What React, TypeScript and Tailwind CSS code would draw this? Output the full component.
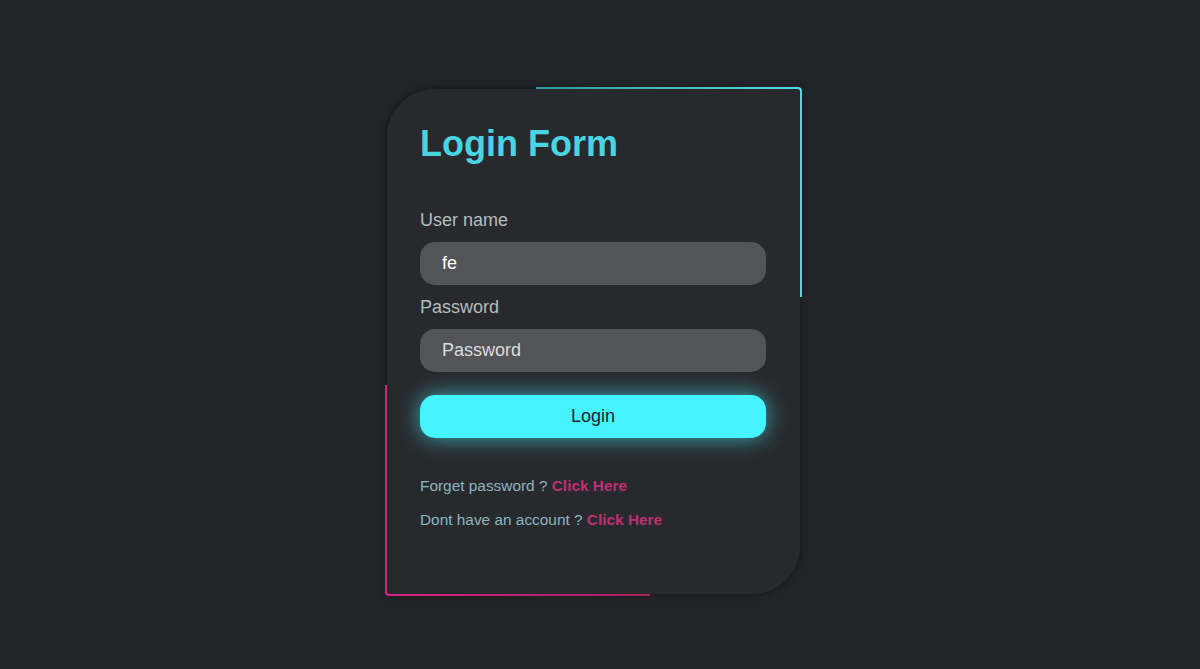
import React from "react";

export default function App() {
  return (
    <div
      className="min-h-screen w-full bg-[#232429] pt-[87px] pl-[385px]"
      style={{ fontFamily: '"Liberation Sans", Arial, sans-serif' }}
    >
      <div className="relative w-[417px] h-[509px]">
        <div className="h-full w-full rounded-tl-[50px] rounded-br-[50px] border-2 border-[#1c1d20] bg-[#28292d] pl-[33px] pr-[34px] pt-[35px] shadow-[0_0_6px_rgba(0,0,0,0.25)]">
          <h1 className="text-[36px] leading-[40px] font-bold text-[#48d4e0]">Login Form</h1>
          <form className="mt-[44px] flex flex-col" onSubmit={(e) => e.preventDefault()}>
            <label className="mb-[10px] text-[18px] leading-[24px] text-[#b4bcbd]">User name</label>
            <input
              className="mb-[10px] h-[43px] w-full rounded-[15px] bg-[#535457] pl-[22px] text-[18px] text-white outline-none placeholder:text-[#dcdcdc]"
              defaultValue="fe"
              placeholder="User name"
            />
            <label className="mb-[10px] text-[18px] leading-[24px] text-[#b4bcbd]">Password</label>
            <input
              type="password"
              className="h-[43px] w-full rounded-[15px] bg-[#535457] pl-[22px] text-[18px] text-white outline-none placeholder:text-[#dcdcdc]"
              placeholder="Password"
            />
            <button
              type="submit"
              className="mt-[23px] h-[43px] w-full rounded-[15px] bg-[#45f3ff] text-[18px] text-[#222428] shadow-[0_0_22px_rgba(69,243,255,0.65)]"
            >
              Login
            </button>
          </form>
          <div className="mt-[38px] flex flex-col gap-[14px] text-[15.4px] leading-[20px] text-[#8ab6c0]">
            <p>
              Forget password ? <a className="font-bold text-[#bd3170]" href="#">Click Here</a>
            </p>
            <p>
              Dont have an account ? <a className="font-bold text-[#bd3170]" href="#">Click Here</a>
            </p>
          </div>
        </div>
        {/* cyan corner decoration */}
        <div className="pointer-events-none absolute right-0 top-0 h-[210px] w-[266px]">
          <div className="absolute left-0 right-[3px] top-0 h-[2px] bg-gradient-to-r from-[#2f9aa2] to-[#4fdde7]" />
          <div className="absolute right-0 top-0 h-[5px] w-[5px] rounded-tr-[4px] border-r-2 border-t-2 border-[#4fdde7]" />
          <div className="absolute bottom-0 right-0 top-[3px] w-[2px] bg-[#4bdde6]" />
        </div>
        {/* pink corner decoration */}
        <div className="pointer-events-none absolute bottom-0 left-0 h-[211px] w-[265px]">
          <div className="absolute bottom-[3px] left-0 top-0 w-[2px] bg-[#d8227f]" />
          <div className="absolute bottom-0 left-0 h-[5px] w-[5px] rounded-bl-[4px] border-b-2 border-l-2 border-[#d8227f]" />
          <div className="absolute bottom-0 left-[3px] right-0 h-[2px] bg-gradient-to-r from-[#d8227f] to-[#a2225f]" />
        </div>
      </div>
    </div>
  );
}
